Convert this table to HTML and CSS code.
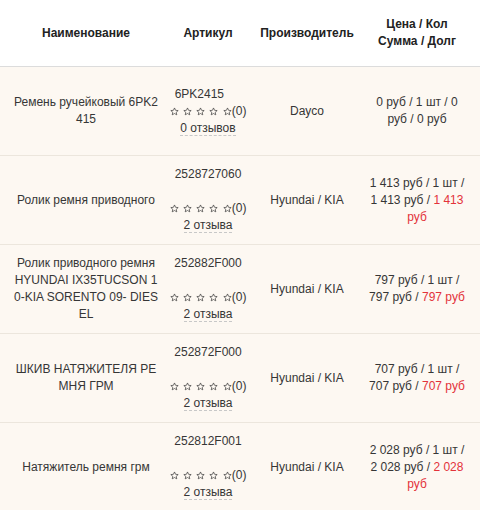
FILE: index.html
```html
<!DOCTYPE html>
<html lang="ru">
<head>
<meta charset="utf-8">
<link rel="stylesheet" href="styles.css">
</head>
<body>
<div class="table">
  <div class="row head">
    <div class="c1">Наименование</div>
    <div class="c2">Артикул</div>
    <div class="c3">Производитель</div>
    <div class="c4">Цена / Кол<br>Сумма / Долг</div>
  </div>

  <div class="row">
    <div class="c1">Ремень ручейковый 6PK2415</div>
    <div class="c2">6PK2415 <span class="sp"></span><br><span class="stars"><i></i><i></i><i></i><i></i><i></i>(0)</span><br><span class="rev">0 отзывов</span></div>
    <div class="c3">Dayco</div>
    <div class="c4">0 руб / 1 шт / 0 руб / 0 руб</div>
  </div>

  <div class="row">
    <div class="c1">Ролик ремня приводного</div>
    <div class="c2">2528727060 <span class="sp"></span><br><span class="stars"><i></i><i></i><i></i><i></i><i></i>(0)</span><br><span class="rev">2 отзыва</span></div>
    <div class="c3">Hyundai / KIA</div>
    <div class="c4">1 413 руб / 1 шт / 1 413 руб / <span class="red">1&nbsp;413</span> <span class="red">руб</span></div>
  </div>

  <div class="row">
    <div class="c1">Ролик приводного ремня HYUNDAI IX35TUCSON 10-KIA SORENTO 09- DIESEL</div>
    <div class="c2">252882F000 <span class="sp"></span><br><span class="stars"><i></i><i></i><i></i><i></i><i></i>(0)</span><br><span class="rev">2 отзыва</span></div>
    <div class="c3">Hyundai / KIA</div>
    <div class="c4">797 руб / 1 шт / 797 руб / <span class="red">797 руб</span></div>
  </div>

  <div class="row">
    <div class="c1">ШКИВ НАТЯЖИТЕЛЯ РЕМНЯ ГРМ</div>
    <div class="c2">252872F000 <span class="sp"></span><br><span class="stars"><i></i><i></i><i></i><i></i><i></i>(0)</span><br><span class="rev">2 отзыва</span></div>
    <div class="c3">Hyundai / KIA</div>
    <div class="c4">707 руб / 1 шт / 707 руб / <span class="red">707 руб</span></div>
  </div>

  <div class="row">
    <div class="c1">Натяжитель ремня грм</div>
    <div class="c2">252812F001 <span class="sp"></span><br><span class="stars"><i></i><i></i><i></i><i></i><i></i>(0)</span><br><span class="rev">2 отзыва</span></div>
    <div class="c3">Hyundai / KIA</div>
    <div class="c4">2 028 руб / 1 шт / 2 028 руб / <span class="red">2&nbsp;028</span> <span class="red">руб</span></div>
  </div>
</div>
</body>
</html>
```

FILE: styles.css
```css
html, body {
  margin: 0;
  padding: 0;
  background: #fdf8f2;
}
body {
  font-family: "Liberation Sans", Arial, sans-serif;
  font-size: 12px;
  line-height: 17px;
  color: #363636;
}
.table {
  width: 480px;
}
.row {
  display: grid;
  grid-template-columns: 168px 80px 118px 114px;
  align-items: center;
  height: 88px;
  border-bottom: 1px solid #ece6dd;
  text-align: center;
}
.row.head {
  height: 66px;
  background: #fff;
  border-bottom: 1px solid #dcdcdc;
  font-weight: bold;
  color: #222;
}
.c1 {
  padding: 0 9px 0 13px;
  word-break: break-all;
}
.c2 {
  min-width: 0;
}
.c3 {
  min-width: 0;
}
.c4 {
  padding: 0 13px 0 1px;
}
.sp {
  display: inline-block;
  width: 14px;
  height: 1px;
}
.stars {
  white-space: nowrap;
  display: inline-block;
  margin-left: -4px;
  margin-right: -4px;
}
.stars i {
  display: inline-block;
  width: 9px;
  height: 9px;
  margin-right: 4.3px;
  vertical-align: -1px;
  background: no-repeat center/9px 9px url("data:image/svg+xml,%3Csvg xmlns='http://www.w3.org/2000/svg' viewBox='0 0 24 24'%3E%3Cpath d='M12 2.5l2.9 6.3 6.9.7-5.2 4.6 1.5 6.8L12 17.4l-6.1 3.5 1.5-6.8-5.2-4.6 6.9-.7z' fill='none' stroke='%23333' stroke-width='1.8' stroke-linejoin='round'/%3E%3C/svg%3E");
}
.stars i:last-child {
  margin-right: 0;
}
.rev {
  border-bottom: 1px dashed #c8c8c8;
  line-height: 14px;
  display: inline-block;
}
.red {
  color: #e3323a;
}
```
